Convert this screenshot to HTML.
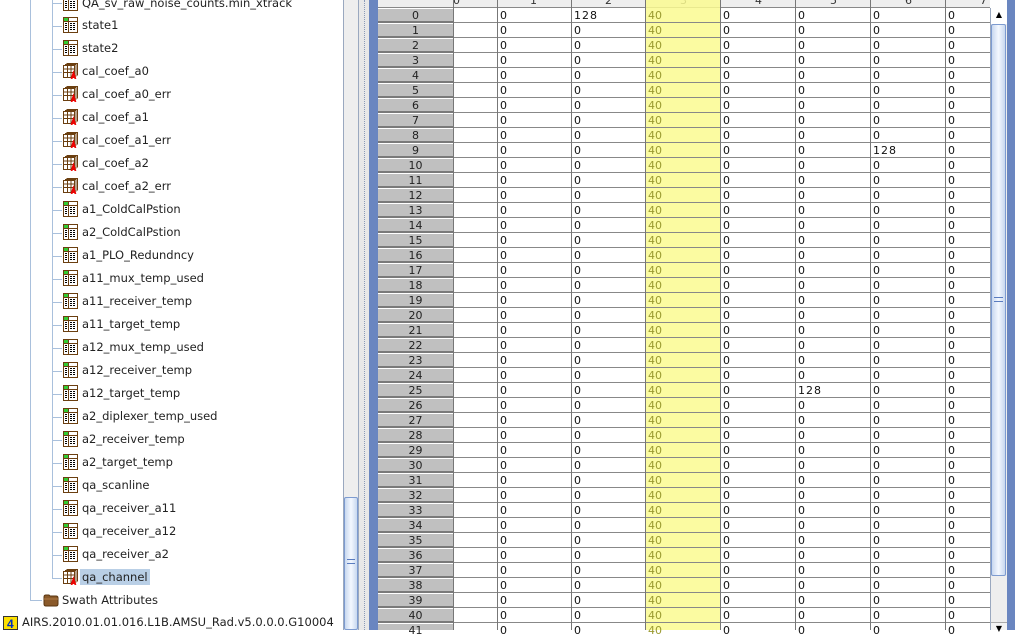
<!DOCTYPE html>
<html><head><meta charset="utf-8"><style>
*{margin:0;padding:0;box-sizing:border-box}
body{width:1017px;height:630px;overflow:hidden;background:#fff;position:relative;font-family:"DejaVu Sans","Liberation Sans",sans-serif;}
.a{position:absolute}
.it{position:absolute;left:63px;height:18px;font-size:11.5px;color:#222;white-space:nowrap;display:flex;align-items:center}
.it svg{margin-right:4px;flex:none}
.col{position:absolute;top:8px;font-size:11px;line-height:15px;white-space:pre;color:#111}
</style></head><body>
<div class="a" style="left:52px;top:0;width:1px;height:578px;background:#a9c0dc"></div>
<div class="a" style="left:30px;top:0;width:1px;height:601px;background:#a9c0dc"></div>
<div class="a" style="left:30px;top:600px;width:12px;height:1px;background:#a9c0dc"></div>
<svg width="0" height="0" style="position:absolute"><defs>
<g id="t"><rect x="0.5" y="0.5" width="14" height="15" fill="#fff" stroke="#6b3f10"/><rect x="1" y="1" width="4" height="3" fill="#3c3"/><path d="M5.5 1v14M1 4.5h13" stroke="#6b3f10"/><path d="M2 6.5h2M2 8.5h2M2 10.5h2M2 12.5h2M7 6.5h6M7 8.5h6M7 10.5h6M7 12.5h6" stroke="#000" stroke-dasharray="2 1"/></g>
<g id="g"><path d="M3.5 0.5h11v12M2 1.5h11v12" fill="none" stroke="#6b3f10"/><rect x="0.5" y="2.5" width="11" height="12" fill="#fff" stroke="#6b3f10"/><path d="M4.5 3v11M8 3v11M1 6h10M1 9.5h10" stroke="#6b3f10"/><path d="M8.5 16l2-6 2 6M9.2 14h2.6" stroke="#e00" stroke-width="1.8" fill="none"/></g>
</defs></svg>
<div class="a" style="left:0;top:0">
<div class="a" style="left:52px;top:3px;width:10px;height:1px;background:#a9c0dc;box-shadow:0 23px #a9c0dc,0 46px #a9c0dc,0 69px #a9c0dc,0 92px #a9c0dc,0 115px #a9c0dc,0 138px #a9c0dc,0 161px #a9c0dc,0 184px #a9c0dc,0 207px #a9c0dc,0 230px #a9c0dc,0 253px #a9c0dc,0 276px #a9c0dc,0 299px #a9c0dc,0 322px #a9c0dc,0 345px #a9c0dc,0 368px #a9c0dc,0 391px #a9c0dc,0 414px #a9c0dc,0 437px #a9c0dc,0 460px #a9c0dc,0 483px #a9c0dc,0 506px #a9c0dc,0 529px #a9c0dc,0 552px #a9c0dc,0 575px #a9c0dc"></div>
</div>
<div class="it" style="top:-6px"><svg width="15" height="16"><use href="#t"/></svg>QA_sv_raw_noise_counts.min_xtrack</div>
<div class="it" style="top:16px"><svg width="15" height="16"><use href="#t"/></svg>state1</div>
<div class="it" style="top:39px"><svg width="15" height="16"><use href="#t"/></svg>state2</div>
<div class="it" style="top:62px"><svg width="15" height="16"><use href="#g"/></svg>cal_coef_a0</div>
<div class="it" style="top:85px"><svg width="15" height="16"><use href="#g"/></svg>cal_coef_a0_err</div>
<div class="it" style="top:108px"><svg width="15" height="16"><use href="#g"/></svg>cal_coef_a1</div>
<div class="it" style="top:131px"><svg width="15" height="16"><use href="#g"/></svg>cal_coef_a1_err</div>
<div class="it" style="top:154px"><svg width="15" height="16"><use href="#g"/></svg>cal_coef_a2</div>
<div class="it" style="top:177px"><svg width="15" height="16"><use href="#g"/></svg>cal_coef_a2_err</div>
<div class="it" style="top:200px"><svg width="15" height="16"><use href="#t"/></svg>a1_ColdCalPstion</div>
<div class="it" style="top:223px"><svg width="15" height="16"><use href="#t"/></svg>a2_ColdCalPstion</div>
<div class="it" style="top:246px"><svg width="15" height="16"><use href="#t"/></svg>a1_PLO_Redundncy</div>
<div class="it" style="top:269px"><svg width="15" height="16"><use href="#t"/></svg>a11_mux_temp_used</div>
<div class="it" style="top:292px"><svg width="15" height="16"><use href="#t"/></svg>a11_receiver_temp</div>
<div class="it" style="top:315px"><svg width="15" height="16"><use href="#t"/></svg>a11_target_temp</div>
<div class="it" style="top:338px"><svg width="15" height="16"><use href="#t"/></svg>a12_mux_temp_used</div>
<div class="it" style="top:361px"><svg width="15" height="16"><use href="#t"/></svg>a12_receiver_temp</div>
<div class="it" style="top:384px"><svg width="15" height="16"><use href="#t"/></svg>a12_target_temp</div>
<div class="it" style="top:407px"><svg width="15" height="16"><use href="#t"/></svg>a2_diplexer_temp_used</div>
<div class="it" style="top:430px"><svg width="15" height="16"><use href="#t"/></svg>a2_receiver_temp</div>
<div class="it" style="top:453px"><svg width="15" height="16"><use href="#t"/></svg>a2_target_temp</div>
<div class="it" style="top:476px"><svg width="15" height="16"><use href="#t"/></svg>qa_scanline</div>
<div class="it" style="top:499px"><svg width="15" height="16"><use href="#t"/></svg>qa_receiver_a11</div>
<div class="it" style="top:522px"><svg width="15" height="16"><use href="#t"/></svg>qa_receiver_a12</div>
<div class="it" style="top:545px"><svg width="15" height="16"><use href="#t"/></svg>qa_receiver_a2</div>
<div class="it" style="top:568px"><svg width="15" height="16"><use href="#g"/></svg><span style="background:#b9cfe6;padding:1px 2px;margin-left:-2px">qa_channel</span></div>
<div class="it" style="top:591px;left:43px"><svg width="16" height="14" style="margin-right:3px"><path d="M1 4q0-2 2-2h3l1 1h6q2 0 2 2v6q0 2-2 2H3q-2 0-2-2z" fill="#8a5a2a" stroke="#5a3510"/><path d="M1 6h14" stroke="#b07a45"/></svg>Swath Attributes</div>
<div class="it" style="top:613px;left:3px"><svg width="16" height="16" style="margin-right:3px"><rect x="0.5" y="2.5" width="14" height="13" fill="#fde000" stroke="#333"/><text x="4" y="14" font-size="12" font-weight="bold" fill="#0030c0" font-family="Liberation Sans">4</text></svg>AIRS.2010.01.01.016.L1B.AMSU_Rad.v5.0.0.0.G10004</div>
<div class="a" style="left:343px;top:0;width:16px;height:630px;background:#eee;border-left:1px solid #9aa8bf;border-right:1px solid #9aa8bf"></div>
<div class="a" style="left:344px;top:497px;width:14px;height:133px;background:linear-gradient(90deg,#c8d8ef,#f4f8ff 50%,#c8d8ef);border:1px solid #7d9bd0;border-radius:2px"></div>
<div class="a" style="left:347px;top:559px;width:8px;height:5px;border-top:1px solid #5a7cc0;border-bottom:1px solid #5a7cc0"></div>
<div class="a" style="left:359px;top:0;width:10px;height:630px;background:#e8e8e8"></div>
<div class="a" style="left:364px;top:0;width:1px;height:630px;border-left:1px dotted #8a9ab8"></div>
<div class="a" style="left:369px;top:0;width:9px;height:630px;background:#6a86c0"></div>
<div class="a" style="left:378px;top:0;width:612px;height:8px;background:#eee;border-bottom:1px solid #888;overflow:hidden;font-size:11px;line-height:2px;color:#333">
<span class="a" style="left:75px">0</span><span class="a" style="left:152px">1</span><span class="a" style="left:227px">2</span><span class="a" style="left:302px">3</span><span class="a" style="left:377px">4</span><span class="a" style="left:452px">5</span><span class="a" style="left:527px">6</span><span class="a" style="left:602px">7</span></div>
<div class="a" style="left:378px;top:8px;width:612px;height:622px;background:repeating-linear-gradient(180deg,transparent 0 14px,#888 14px 15px)"></div>
<div class="a" style="left:645px;top:0;width:75px;height:630px;background:#fafa90;opacity:.85"></div>
<div class="a" style="left:645px;top:8px;width:75px;height:622px;background:repeating-linear-gradient(180deg,transparent 0 14px,#888 14px 15px)"></div>
<div class="a" style="left:378px;top:8px;width:75px;height:622px;background:repeating-linear-gradient(180deg,#fff 0 1px,#c0c0c0 1px 13px,#7a7a7a 13px 15px)"></div>
<div class="a" style="left:453px;top:0;width:1px;height:630px;background:#777"></div>
<div class="a" style="left:497px;top:0;width:1px;height:630px;background:#777"></div>
<div class="a" style="left:571px;top:0;width:1px;height:630px;background:#777"></div>
<div class="a" style="left:645px;top:0;width:1px;height:630px;background:#777"></div>
<div class="a" style="left:720px;top:0;width:1px;height:630px;background:#777"></div>
<div class="a" style="left:795px;top:0;width:1px;height:630px;background:#777"></div>
<div class="a" style="left:870px;top:0;width:1px;height:630px;background:#777"></div>
<div class="a" style="left:945px;top:0;width:1px;height:630px;background:#777"></div>
<div class="col" style="left:378px;width:75px;text-align:center;color:#222">0
1
2
3
4
5
6
7
8
9
10
11
12
13
14
15
16
17
18
19
20
21
22
23
24
25
26
27
28
29
30
31
32
33
34
35
36
37
38
39
40
41</div>
<div class="col" style="left:500px">0
0
0
0
0
0
0
0
0
0
0
0
0
0
0
0
0
0
0
0
0
0
0
0
0
0
0
0
0
0
0
0
0
0
0
0
0
0
0
0
0
0</div>
<div class="col" style="left:574px;letter-spacing:1px">128
0
0
0
0
0
0
0
0
0
0
0
0
0
0
0
0
0
0
0
0
0
0
0
0
0
0
0
0
0
0
0
0
0
0
0
0
0
0
0
0
0</div>
<div class="col" style="left:648px;color:#9a9a30">40
40
40
40
40
40
40
40
40
40
40
40
40
40
40
40
40
40
40
40
40
40
40
40
40
40
40
40
40
40
40
40
40
40
40
40
40
40
40
40
40
40</div>
<div class="col" style="left:723px">0
0
0
0
0
0
0
0
0
0
0
0
0
0
0
0
0
0
0
0
0
0
0
0
0
0
0
0
0
0
0
0
0
0
0
0
0
0
0
0
0
0</div>
<div class="col" style="left:798px;letter-spacing:1px">0
0
0
0
0
0
0
0
0
0
0
0
0
0
0
0
0
0
0
0
0
0
0
0
0
128
0
0
0
0
0
0
0
0
0
0
0
0
0
0
0
0</div>
<div class="col" style="left:873px;letter-spacing:1px">0
0
0
0
0
0
0
0
0
128
0
0
0
0
0
0
0
0
0
0
0
0
0
0
0
0
0
0
0
0
0
0
0
0
0
0
0
0
0
0
0
0</div>
<div class="col" style="left:948px">0
0
0
0
0
0
0
0
0
0
0
0
0
0
0
0
0
0
0
0
0
0
0
0
0
0
0
0
0
0
0
0
0
0
0
0
0
0
0
0
0
0</div>
<div class="a" style="left:990px;top:8px;width:17px;height:622px;background:#eee;border-left:1px solid #9aa8bf"></div>
<div class="a" style="left:991px;top:8px;width:16px;height:16px;background:#fff;font-size:8px;text-align:center;line-height:14px">▲</div>
<div class="a" style="left:991px;top:24px;width:15px;height:552px;background:linear-gradient(90deg,#c8d8ef,#f4f8ff 50%,#c8d8ef);border:1px solid #7d9bd0;border-radius:2px"></div>
<div class="a" style="left:994px;top:297px;width:9px;height:5px;border-top:1px solid #5a7cc0;border-bottom:1px solid #5a7cc0"></div>
<div class="a" style="left:991px;top:622px;width:16px;height:8px;background:#f4f4f4;border-top:1px solid #aaa;font-size:8px;text-align:center;line-height:12px">▼</div>
<div class="a" style="left:1007px;top:0;width:8px;height:630px;background:#6a86c0"></div>
</body></html>
